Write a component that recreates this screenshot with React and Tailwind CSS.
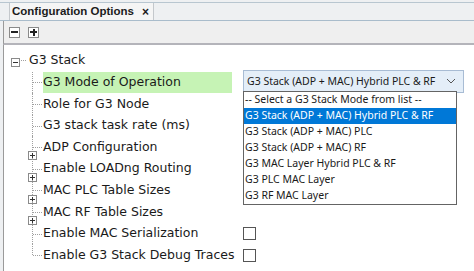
import React from 'react';

const treeFont = { fontFamily: '"DejaVu Sans", Verdana, sans-serif' };
const uiFont = { fontFamily: '"Noto Sans", "Liberation Sans", sans-serif' };

const PlusBox = ({ open }) => (
  <span className="inline-flex w-[9px] h-[9px] border border-[#8a8a8a] bg-white items-center justify-center relative">
    <span className="absolute w-[5px] h-px bg-[#333]" />
    {!open && <span className="absolute w-px h-[5px] bg-[#333]" />}
  </span>
);

const rows = [
  { label: 'G3 Mode of Operation', kind: 'select', active: true },
  { label: 'Role for G3 Node' },
  { label: 'G3 stack task rate (ms)' },
  { label: 'ADP Configuration', expand: true },
  { label: 'Enable LOADng Routing', expand: true },
  { label: 'MAC PLC Table Sizes', expand: true },
  { label: 'MAC RF Table Sizes', expand: true },
  { label: 'Enable MAC Serialization', kind: 'check' },
  { label: 'Enable G3 Stack Debug Traces', kind: 'check', last: true },
];

const options = [
  '-- Select a G3 Stack Mode from list --',
  'G3 Stack (ADP + MAC) Hybrid PLC & RF',
  'G3 Stack (ADP + MAC) PLC',
  'G3 Stack (ADP + MAC) RF',
  'G3 MAC Layer Hybrid PLC & RF',
  'G3 PLC MAC Layer',
  'G3 RF MAC Layer',
];

const Row = ({ row }) => (
  <div className="flex h-[21.6px] items-center relative">
    {/* tree guide */}
    <div className="w-[43px] h-full relative shrink-0">
      <span
        className={`absolute left-[32px] top-0 w-0 border-l border-dotted border-[#a0a0a0] ${row.last ? 'h-1/2' : 'h-full'}`}
      />
      <span className="absolute left-[33px] top-1/2 w-[9px] h-0 border-t border-dotted border-[#a0a0a0]" />
      {row.expand && (
        <span className="absolute left-[28px] top-[6px]">
          <PlusBox />
        </span>
      )}
    </div>
    <div
      className={`w-[189px] shrink-0 h-full flex items-center whitespace-nowrap text-[12.5px] text-[#1a1a1a] ${row.active ? 'bg-[#c6f3b5]' : ''}`}
      style={treeFont}
    >
      {row.label}
    </div>
    <div className="ml-[11px] flex items-center">
      {row.kind === 'select' && (
        <div
          className="w-[221px] h-[23px] -mt-[2px] border border-[#a8bcd4] bg-[#e4eef8] flex items-center justify-between px-[3px] whitespace-nowrap text-[10.5px] text-[#1a1a1a]"
          style={uiFont}
        >
          <span>G3 Stack (ADP + MAC) Hybrid PLC &amp; RF</span>
          <svg width="10" height="6" viewBox="0 0 10 6" className="mr-[4px]">
            <path d="M1 1 L5 5 L9 1" fill="none" stroke="#555" strokeWidth="1" />
          </svg>
        </div>
      )}
      {row.kind === 'check' && (
        <span className="w-[13px] h-[13px] border border-[#555] bg-white" />
      )}
    </div>
  </div>
);

export default function App() {
  return (
    <div className="w-[474px] h-[271px] bg-[#eef0f2] overflow-hidden relative">
      {/* tab strip */}
      <div className="mt-[2px] h-[19px] border-t border-[#b8c6d0] border-b border-b-[#a9bccb] flex pl-[9px]">
        <div
          className="h-full pl-[2px] pr-[4px] flex items-center gap-[8px] bg-[#f5f5f5] border-x border-[#c4c8cc] text-[11.5px] font-bold text-[#1c1c1c]"
          style={{ fontFamily: '"Liberation Sans", Arial, sans-serif' }}
        >
          <span>Configuration Options</span>
          <span className="text-[12px]">×</span>
        </div>
      </div>
      {/* toolbar */}
      <div className="ml-[3px] h-[24px] border-l border-[#9a9a9a] border-b-2 border-b-[#b4b4ba] flex items-center gap-[8px] pl-[5px] bg-[#efefef]">
        <span className="w-[11px] h-[11px] border border-[#8a8a8a] bg-white flex items-center justify-center">
          <span className="w-[7px] h-[2px] bg-[#222]" />
        </span>
        <span className="w-[11px] h-[11px] border border-[#8a8a8a] bg-white flex items-center justify-center relative">
          <span className="absolute w-[7px] h-[2px] bg-[#222]" />
          <span className="absolute w-[2px] h-[7px] bg-[#222]" />
        </span>
      </div>
      {/* tree */}
      <div className="ml-[3px] h-[230px] border-l border-[#9a9a9a] bg-white pt-[5px] relative">
        <div className="flex h-[21.6px] items-center">
          <span className="ml-[7px]">
            <PlusBox open />
          </span>
          <span className="w-[5px] h-0 border-t border-dotted border-[#a0a0a0] ml-[1px] mr-[3px]" />
          <span className="text-[12.5px] text-[#1a1a1a]" style={treeFont}>
            G3 Stack
          </span>
        </div>
        <div className="-ml-[4px]">
          {rows.map((r) => (
            <Row key={r.label} row={r} />
          ))}
        </div>
        {/* open dropdown list */}
        <div
          className="absolute left-[239px] top-[46px] w-[214px] border border-[#646464] bg-white whitespace-nowrap text-[10.5px] text-[#1a1a1a]"
          style={uiFont}
        >
          {options.map((o, i) => (
            <div
              key={o}
              className={`h-[16px] flex items-center pl-[1px] ${i === 1 ? 'bg-[#0078d7] text-white' : ''}`}
            >
              {o}
            </div>
          ))}
        </div>
      </div>
    </div>
  );
}
